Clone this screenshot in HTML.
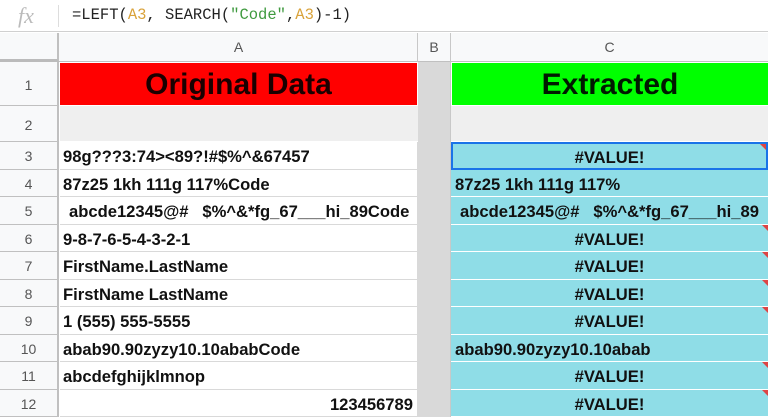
<!DOCTYPE html><html><head><style>
body{margin:0;width:768px;height:417px;overflow:hidden;background:#fff;font-family:"Liberation Sans",Arial,sans-serif;position:relative}
div{position:absolute;box-sizing:border-box}
.rh{left:0;width:59px;background:#f8f9fa;border-bottom:1px solid #c0c0c0;border-right:2px solid #c0c0c0;color:#555;font-size:14px;text-align:center}
.a{left:60px;width:358px;border-bottom:1px solid #d9d9d9;border-right:1px solid #d9d9d9;font-weight:bold;font-size:16.6px;padding-left:3px;color:#111;white-space:nowrap}
.b{left:418px;width:33px;background:#d9d9d9;border-right:1px solid #c8c8c8}
.c{left:451px;width:317px;background:#8fdde7;border-bottom:1px solid #fff;font-weight:bold;font-size:16.6px;padding-left:4px;color:#111;white-space:nowrap}
.ctr{text-align:center;padding-left:0}
.tri{position:absolute;right:0;top:0;width:0;height:0;border-left:6px solid transparent;border-top:6px solid #d44}
</style></head><body>
<div style="left:0;top:0;width:768px;height:32px;border-bottom:1px solid #d0d0d0;background:#fff"></div>
<div style="left:18px;top:3px;font-family:'Liberation Serif',serif;font-style:italic;font-size:22px;color:#bbb">fx</div>
<div style="left:58px;top:5px;width:1px;height:22px;background:#ddd"></div>
<div style="left:72px;top:6px;font-family:'Liberation Mono',monospace;font-size:15.5px;color:#222">=LEFT(<span style="color:#d9a23a">A3</span>, SEARCH(<span style="color:#3f9a3f">"Code"</span>,<span style="color:#d9a23a">A3</span>)-1)</div>
<div style="left:0;top:33px;width:768px;height:29px;background:#f8f9fa;border-bottom:1px solid #c0c0c0"></div>
<div style="left:0;top:33px;width:59px;height:29px;border-right:2px solid #c0c0c0;border-bottom:3px solid #bbb"></div>
<div style="left:60px;top:33px;width:358px;height:29px;border-right:1px solid #c8c8c8;text-align:center;line-height:29px;font-size:14px;color:#555">A</div>
<div style="left:418px;top:33px;width:33px;height:29px;border-right:1px solid #c8c8c8;text-align:center;line-height:29px;font-size:14px;color:#555">B</div>
<div style="left:451px;top:33px;width:317px;height:29px;text-align:center;line-height:29px;font-size:14px;color:#555">C</div>

<div class="rh" style="top:62px;height:44px;line-height:46px">1</div>
<div style="left:60px;top:63px;width:357px;height:42px;background:#ff0000;text-align:center;line-height:44px;font-weight:bold;font-size:30px;color:#1a0000">Original Data</div>
<div class="b" style="top:62px;height:355px"></div>
<div style="left:452px;top:63px;width:316px;height:42px;background:#00ff00;text-align:center;line-height:44px;font-weight:bold;font-size:30px;color:#001a00">Extracted</div>
<div class="rh" style="top:106px;height:36px;line-height:38px">2</div>
<div style="left:60px;top:106px;width:358px;height:35px;background:#efefef"></div>
<div style="left:451px;top:106px;width:317px;height:35px;background:#efefef"></div>

<div class="rh" style="top:142px;height:27.5px;line-height:29px">3</div>
<div class="a" style="top:142px;height:27.5px;line-height:29px">98g???3:74&gt;&lt;89?!#$%^&amp;67457</div>
<div class="c ctr" style="top:142px;height:27.5px;line-height:27px;border:2px solid #1a73e8">#VALUE!<span class="tri"></span></div>

<div class="rh" style="top:169.5px;height:27.5px;line-height:29px">4</div>
<div class="a" style="top:169.5px;height:27.5px;line-height:29px">87z25 1kh 111g 117%Code</div>
<div class="c" style="top:169.5px;height:27.5px;line-height:29px">87z25 1kh 111g 117%</div>

<div class="rh" style="top:197px;height:27.5px;line-height:29px">5</div>
<div class="a" style="top:197px;height:27.5px;line-height:29px;padding-left:9px;white-space:pre">abcde12345@#   $%^&amp;*fg_67___hi_89Code</div>
<div class="c" style="top:197px;height:27.5px;line-height:29px;padding-left:9px;white-space:pre;overflow:hidden">abcde12345@#   $%^&amp;*fg_67___hi_89</div>

<div class="rh" style="top:224.5px;height:27.5px;line-height:29px">6</div>
<div class="a" style="top:224.5px;height:27.5px;line-height:29px">9-8-7-6-5-4-3-2-1</div>
<div class="c ctr" style="top:224.5px;height:27.5px;line-height:29px">#VALUE!<span class="tri"></span></div>

<div class="rh" style="top:252px;height:27.5px;line-height:29px">7</div>
<div class="a" style="top:252px;height:27.5px;line-height:29px">FirstName.LastName</div>
<div class="c ctr" style="top:252px;height:27.5px;line-height:29px">#VALUE!<span class="tri"></span></div>

<div class="rh" style="top:279.5px;height:27.5px;line-height:29px">8</div>
<div class="a" style="top:279.5px;height:27.5px;line-height:29px">FirstName LastName</div>
<div class="c ctr" style="top:279.5px;height:27.5px;line-height:29px">#VALUE!<span class="tri"></span></div>

<div class="rh" style="top:307px;height:27.5px;line-height:29px">9</div>
<div class="a" style="top:307px;height:27.5px;line-height:29px">1 (555) 555-5555</div>
<div class="c ctr" style="top:307px;height:27.5px;line-height:29px">#VALUE!<span class="tri"></span></div>

<div class="rh" style="top:334.5px;height:27.5px;line-height:29px">10</div>
<div class="a" style="top:334.5px;height:27.5px;line-height:29px">abab90.90zyzy10.10ababCode</div>
<div class="c" style="top:334.5px;height:27.5px;line-height:29px">abab90.90zyzy10.10abab</div>

<div class="rh" style="top:362px;height:27.5px;line-height:29px">11</div>
<div class="a" style="top:362px;height:27.5px;line-height:29px">abcdefghijklmnop</div>
<div class="c ctr" style="top:362px;height:27.5px;line-height:29px">#VALUE!<span class="tri"></span></div>

<div class="rh" style="top:389.5px;height:27.5px;line-height:29px">12</div>
<div class="a" style="top:389.5px;height:27.5px;line-height:29px;text-align:right;padding-right:4px">123456789</div>
<div class="c ctr" style="top:389.5px;height:27.5px;line-height:29px">#VALUE!<span class="tri"></span></div>
</body></html>
